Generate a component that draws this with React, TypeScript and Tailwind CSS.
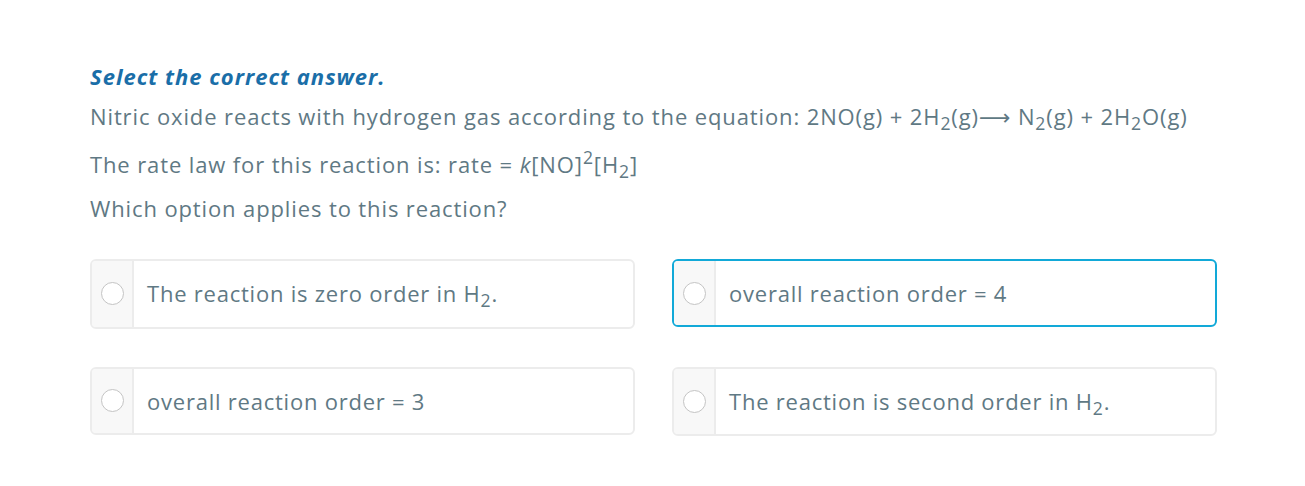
import React from "react";

const Sub = ({ children }: { children: React.ReactNode }) => (
  <span className="text-[0.8em] align-[-0.28em] leading-none">{children}</span>
);
const Sup = ({ children }: { children: React.ReactNode }) => (
  <span className="text-[0.8em] align-[0.5em] leading-none">{children}</span>
);

function Option({ children, selected }: { children: React.ReactNode; selected?: boolean }) {
  return (
    <div
      className={
        "flex rounded-[6px] border-2 overflow-hidden bg-white " +
        (selected ? "border-[#12a9d8]" : "border-[#ececec]")
      }
    >
      <div className="w-[42px] shrink-0 bg-[#f8f8f8] border-r-2 border-[#ececec] flex items-center justify-center">
        <div className="w-[23px] h-[23px] rounded-full border border-[#c4c4c4] bg-white" />
      </div>
      <div className="px-[13px] py-[17px] leading-[30px] text-[22px] tracking-[0.035em] text-[#5f7984]">{children}</div>
    </div>
  );
}

export default function App() {
  return (
    <div
      className="w-[1305px] h-[486px] bg-white pt-[61px] pl-[90px] pr-[88px]"
      style={{ fontFamily: '"Open Sans", "DejaVu Sans", sans-serif' }}
    >
      <div className="text-[22px] leading-[30px] font-bold italic tracking-[0.045em] text-[#1a6ea8]">Select the correct answer.</div>
      <div className="text-[22px] tracking-[0.04em] text-[#5f7984]">
        <div className="mt-[10px] leading-[30px]">
          Nitric oxide reacts with hydrogen gas according to the equation: 2NO(g) + 2H<Sub>2</Sub>(g)⟶ N<Sub>2</Sub>(g) + 2H<Sub>2</Sub>O(g)
        </div>
        <div className="mt-[16px] leading-[30px]">
          The rate law for this reaction is: rate = <i>k</i>[NO]<Sup>2</Sup>[H<Sub>2</Sub>]
        </div>
        <div className="mt-[13px] leading-[30px]">Which option applies to this reaction?</div>
      </div>
      <div className="mt-[36px] grid grid-cols-2 gap-x-[37px] gap-y-[38px] items-start">
        <Option>
          The reaction is zero order in H<Sub>2</Sub>.
        </Option>
        <Option selected>overall reaction order = 4</Option>
        <Option>overall reaction order = 3</Option>
        <Option>
          The reaction is second order in H<Sub>2</Sub>.
        </Option>
      </div>
    </div>
  );
}
